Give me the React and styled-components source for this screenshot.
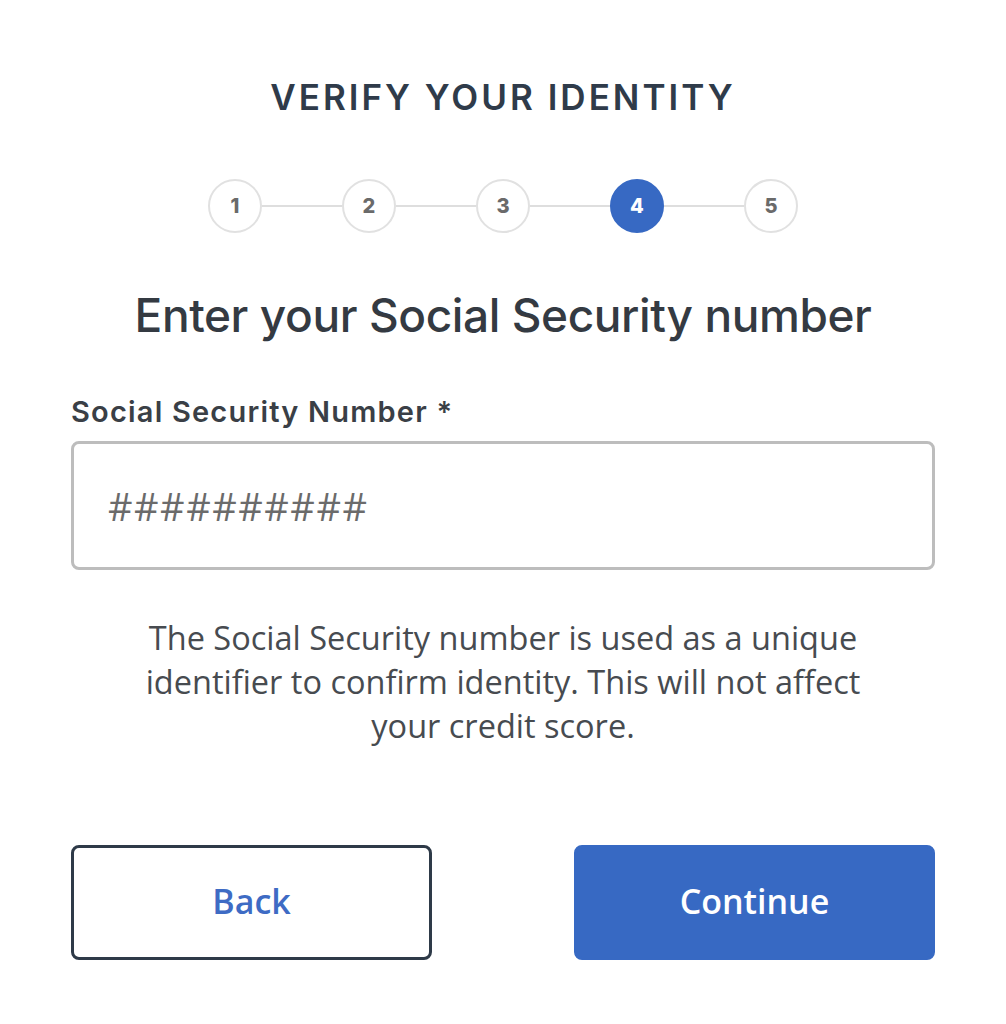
import React from 'react';
import styled, { createGlobalStyle } from 'styled-components';

const GlobalStyle = createGlobalStyle`
  body {
    margin: 0;
    background: #ffffff;
    font-family: 'Open Sans', sans-serif;
  }
`

const Page = styled.div`
  width: 864px;
  margin: 0 auto;
  padding-top: 74px;
  display: flex;
  flex-direction: column;
  align-items: stretch;
`

const Title = styled.h1`
  margin: 0;
  text-align: center;
  font-family: 'Inter', sans-serif;
  font-weight: 600;
  font-size: 35px;
  line-height: 46px;
  letter-spacing: 3px;
  color: #2f3b4a;
`

const Stepper = styled.div`
  display: flex;
  align-items: center;
  justify-content: center;
  margin-top: 59px;
`

const StepCircle = styled.div`
  width: 54px;
  height: 54px;
  box-sizing: border-box;
  border-radius: 50%;
  border: 2px solid ${p => (p.active ? '#3769c3' : '#e1e1e1')};
  background: ${p => (p.active ? '#3769c3' : '#ffffff')};
  color: ${p => (p.active ? '#ffffff' : '#6a6a6a')};
  display: flex;
  align-items: center;
  justify-content: center;
  font-family: 'Inter', sans-serif;
  font-weight: 800;
  font-size: 20px;
`

const Connector = styled.div`
  width: 80px;
  height: 2px;
  background: #dedede;
`

const Heading = styled.h2`
  margin: 55px 0 0;
  text-align: center;
  font-family: 'Inter', sans-serif;
  font-weight: 500;
  font-size: 46px;
  line-height: 54px;
  letter-spacing: -0.4px;
  color: #343a42;
`

const Label = styled.label`
  display: block;
  margin-top: 52px;
  font-family: 'Inter', sans-serif;
  font-weight: 600;
  font-size: 29px;
  line-height: 36px;
  letter-spacing: 1.2px;
  color: #3a3f46;
`

const Input = styled.input`
  margin-top: 11px;
  width: 100%;
  height: 129px;
  box-sizing: border-box;
  border: 3px solid #bdbdbd;
  border-radius: 8px;
  padding: 0 34px;
  font-family: 'Open Sans', sans-serif;
  font-weight: 500;
  font-size: 38px;
  letter-spacing: 1.5px;
  color: #555;
  outline: none;

  &::placeholder {
    color: #6b6b6b;
  }
`

const HelpText = styled.p`
  margin: 46px auto 0;
  max-width: 740px;
  text-align: center;
  font-family: 'Open Sans', sans-serif;
  font-size: 32.5px;
  line-height: 44px;
  color: #474b50;
`

const Actions = styled.div`
  display: flex;
  justify-content: space-between;
  margin-top: 97px;
`

const Button = styled.button`
  width: 361px;
  height: 115px;
  box-sizing: border-box;
  border-radius: 8px;
  border: 3px solid ${p => (p.primary ? '#3769c3' : '#2e3a48')};
  background: ${p => (p.primary ? '#3769c3' : '#ffffff')};
  color: ${p => (p.primary ? '#ffffff' : '#3e6bc4')};
  font-family: 'Open Sans', sans-serif;
  font-weight: 600;
  font-size: 34px;
  padding-bottom: 4px;
  cursor: pointer;
`

const steps = [1, 2, 3, 4, 5];

export default function App() {
  const current = 4;
  return (
    <>
      <GlobalStyle />
      <Page>
        <Title>VERIFY YOUR IDENTITY</Title>
        <Stepper>
          {steps.map((n, i) => (
            <React.Fragment key={n}>
              {i > 0 && <Connector />}
              <StepCircle active={n === current}>{n}</StepCircle>
            </React.Fragment>
          ))}
        </Stepper>
        <Heading>Enter your Social Security number</Heading>
        <Label htmlFor="ssn">Social Security Number *</Label>
        <Input id="ssn" type="text" placeholder="##########" />
        <HelpText>
          The Social Security number is used as a unique identifier to confirm identity. This will not affect your credit score.
        </HelpText>
        <Actions>
          <Button>Back</Button>
          <Button primary>Continue</Button>
        </Actions>
      </Page>
    </>
  );
}
